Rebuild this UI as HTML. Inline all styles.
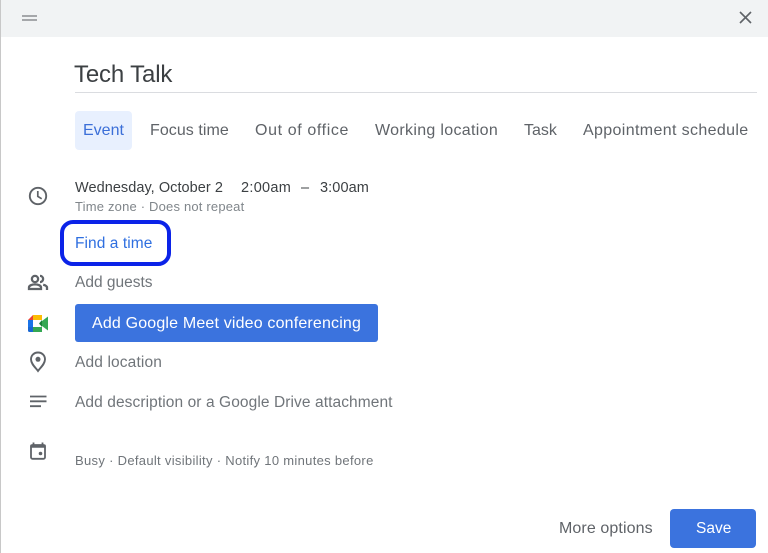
<!DOCTYPE html>
<html>
<head>
<meta charset="utf-8">
<style>
html,body{margin:0;padding:0;background:#fff}
body{position:relative;width:768px;height:553px;overflow:hidden;font-family:"Liberation Sans",sans-serif}
#p{position:absolute;left:0;top:0;width:768px;height:553px;overflow:hidden;filter:blur(.3px)}
.t{position:absolute;white-space:nowrap;line-height:20px;height:20px}
.tab{top:121px;font-size:16px;color:#5f6368}
.g{color:#70757a;font-size:15.5px}
.s{color:#80868b;font-size:13px}
svg{position:absolute;overflow:visible}
</style>
</head>
<body>
<div id="p">
<div style="position:absolute;left:0;top:0;width:1px;height:553px;background:#c8c8c8"></div>
<div style="position:absolute;left:1px;top:0;width:767px;height:37px;background:#f1f3f4"></div>
<div style="position:absolute;left:22px;top:15px;width:15px;height:2px;background:#a5a7aa"></div>
<div style="position:absolute;left:22px;top:19px;width:15px;height:2px;background:#a5a7aa"></div>
<svg style="left:739px;top:11px" width="13" height="13" viewBox="0 0 13 13"><path d="M1 1L12 12M12 1L1 12" stroke="#5f6368" stroke-width="1.600" fill="none"/></svg>

<div class="t" style="left:74px;top:60px;height:30px;line-height:30px;font-size:24px;color:#3c4043;letter-spacing:-.15px">Tech Talk</div>
<div style="position:absolute;left:75px;top:92px;width:682px;height:1px;background:#dadce0"></div>

<div style="position:absolute;left:75px;top:111px;width:57px;height:39px;border-radius:4px;background:#e8f0fe"></div>
<div class="t tab" style="left:83px;color:#3b6fd8">Event</div>
<div class="t tab" style="left:150px;letter-spacing:.06px">Focus time</div>
<div class="t tab" style="left:255px;letter-spacing:.62px">Out of office</div>
<div class="t tab" style="left:375px;letter-spacing:.32px">Working location</div>
<div class="t tab" style="left:524px">Task</div>
<div class="t tab" style="left:583px;letter-spacing:.36px">Appointment schedule</div>

<svg style="left:27px;top:185px" width="22" height="22" viewBox="0 0 22 22"><circle cx="11" cy="11" r="8.200" fill="none" stroke="#5f6368" stroke-width="1.900"/><path d="M10.800 6v5.400l3.900 2.400" fill="none" stroke="#5f6368" stroke-width="1.700"/></svg>
<div class="t" style="left:75px;top:178px;font-size:14.5px;color:#3c4043;letter-spacing:.05px">Wednesday, October 2</div>
<div class="t" style="left:241px;top:178px;font-size:14.5px;color:#3c4043;letter-spacing:.3px">2:00am</div>
<div class="t" style="left:301px;top:178px;font-size:14.5px;color:#3c4043">–</div>
<div class="t" style="left:320px;top:178px;font-size:14.5px;color:#3c4043;letter-spacing:.1px">3:00am</div>
<div class="t s" style="left:75px;top:197px;letter-spacing:.19px">Time zone · Does not repeat</div>

<div style="position:absolute;left:60px;top:220px;width:111px;height:46px;box-sizing:border-box;border:4.500px solid #0b23e8;border-radius:13px"></div>
<div class="t" style="left:75px;top:234px;font-size:15.5px;color:#2f6fe0;letter-spacing:.07px">Find a time</div>

<svg style="left:27px;top:274px" width="22" height="18" viewBox="0 0 22 18"><circle cx="8" cy="5" r="3.100" fill="none" stroke="#5f6368" stroke-width="2.300"/><path d="M2 15v-1.600C2 11.600 5 10.400 8 10.400s6 1.200 6 3V15z" fill="none" stroke="#5f6368" stroke-width="2.300"/><path d="M13 1.900a3.100 3.100 0 0 1 0 6.200M16.200 10.800c2 .5 3.800 1.400 3.800 2.800V16" fill="none" stroke="#5f6368" stroke-width="2.300"/></svg>
<div class="t g" style="left:75px;top:273px">Add guests</div>

<svg style="left:28px;top:315px" width="20" height="17" viewBox="0 0 20 17">
<path d="M5 0H14V5H5z" fill="#fbbc04"/>
<path d="M5 0L0 5H5z" fill="#ea4335"/>
<path d="M0 5H5V12H0z" fill="#1a73e8"/>
<path d="M0 12H5V17H1.500Q0 17 0 15.500z" fill="#1967d2"/>
<path d="M5 12H14V17H5z" fill="#34a853"/>
<path d="M14 5V12L11 8.500z" fill="#188038"/>
<path d="M14 6L20 1.500V15.500L14 11z" fill="#34a853"/>
<path d="M12.500 0Q14 0 14 1.500V5H12z" fill="#fbbc04"/>
</svg>
<div style="position:absolute;left:75px;top:304px;width:303px;height:38px;border-radius:3px;background:#3b73de"></div>
<div class="t" style="left:92px;top:314px;font-size:16px;color:#fff;letter-spacing:.17px">Add Google Meet video conferencing</div>

<svg style="left:29px;top:351px" width="18" height="22" viewBox="0 0 18 22"><path d="M9 1.500C5 1.500 2 4.500 2 8.300c0 4.700 4.700 8.500 7 11.700 2.300-3.200 7-7 7-11.700C16 4.500 13 1.500 9 1.500z" fill="none" stroke="#5f6368" stroke-width="1.900"/><circle cx="9" cy="8.300" r="2.500" fill="#5f6368"/></svg>
<div class="t g" style="left:75px;top:353px;letter-spacing:.14px">Add location</div>

<svg style="left:30px;top:395px" width="17" height="13" viewBox="0 0 17 13"><path d="M0 1.500H16.500M0 6.300H16.500M0 11.200H11" stroke="#5f6368" stroke-width="1.800" fill="none"/></svg>
<div class="t g" style="left:75px;top:393px;letter-spacing:.09px">Add description or a Google Drive attachment</div>

<svg style="left:30px;top:442px" width="16" height="18" viewBox="0 0 16 18"><rect x="1" y="3" width="14" height="13.800" rx="1.500" fill="none" stroke="#5f6368" stroke-width="1.800"/><path d="M1 3.500H15V5H1z" stroke="#5f6368" stroke-width="1.400" fill="#5f6368"/><path d="M3.500 0.500V3M12.500 0.500V3" stroke="#5f6368" stroke-width="1.800" fill="none"/><circle cx="10.500" cy="11.500" r="1.800" fill="#5f6368"/></svg>
<div class="t s" style="left:75px;top:451px;color:#70757a;letter-spacing:.31px">Busy · Default visibility · Notify 10 minutes before</div>

<div class="t" style="left:559px;top:519px;font-size:16px;color:#5f6368;letter-spacing:.1px">More options</div>
<div style="position:absolute;left:670px;top:509px;width:86px;height:39px;border-radius:4px;background:#3b73de"></div>
<div class="t" style="left:696px;top:519px;font-size:15.5px;color:#fff">Save</div>
</div>
</body>
</html>
